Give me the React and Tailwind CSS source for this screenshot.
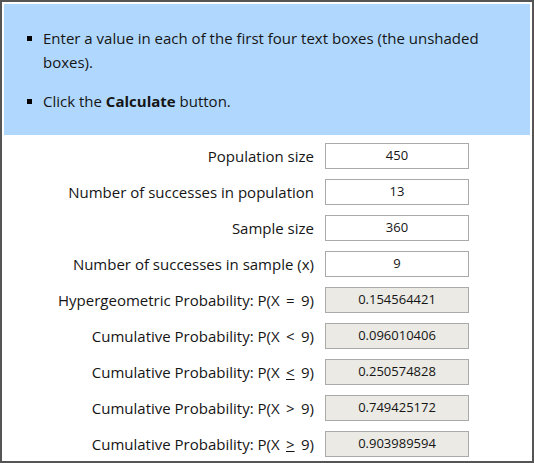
import React from 'react';

const P = ({ children }) => <span className="[word-spacing:2.5px]">{children}</span>;

const rows = [
  { label: 'Population size', value: '450' },
  { label: 'Number of successes in population', value: '13' },
  { label: 'Sample size', value: '360' },
  { label: 'Number of successes in sample (x)', value: '9' },
  { label: <>Hypergeometric Probability: <P>P(X = 9)</P></>, value: '0.154564421', shaded: true },
  { label: <>Cumulative Probability: <P>P(X &lt; 9)</P></>, value: '0.096010406', shaded: true },
  { label: <>Cumulative Probability: <P>P(X <u>&lt;</u> 9)</P></>, value: '0.250574828', shaded: true },
  { label: <>Cumulative Probability: <P>P(X &gt; 9)</P></>, value: '0.749425172', shaded: true },
  { label: <>Cumulative Probability: <P>P(X <u>&gt;</u> 9)</P></>, value: '0.903989594', shaded: true },
];

const Bullet = ({ children }) => (
  <li className="flex">
    <span className="w-[5px] h-[5px] bg-black mt-[10px] mr-[11px] shrink-0" />
    <span>{children}</span>
  </li>
);

export default function App() {
  return (
    <div
      className="w-[534px] h-[463px] border-2 border-[#555] p-[2px] bg-white text-[#151515]"
      style={{ fontFamily: '"Open Sans", "Noto Sans", sans-serif' }}
    >
      <div className="bg-[#b0d8fe] h-[131px] pl-[23px] pr-[28px] pt-[22px] text-[15px] leading-[24px]">
        <ul className="flex flex-col gap-[15px]">
          <Bullet>Enter a value in each of the first four text boxes (the unshaded boxes).</Bullet>
          <Bullet>
            Click the <b className="font-bold">Calculate</b> button.
          </Bullet>
        </ul>
      </div>
      <div className="mt-[8px] pr-[61px] grid grid-cols-[1fr_144px] gap-x-[11px] gap-y-[10px] items-center">
        {rows.map((r, i) => (
          <React.Fragment key={i}>
            <div className="text-right text-[15px] leading-[26px] whitespace-nowrap">{r.label}</div>
            <div
              className={
                'h-[26px] border border-[#aaa] flex items-center justify-center text-[13px] ' +
                (r.shaded ? 'bg-[#ebeae4]' : 'bg-white')
              }
            >
              {r.value}
            </div>
          </React.Fragment>
        ))}
      </div>
    </div>
  );
}
